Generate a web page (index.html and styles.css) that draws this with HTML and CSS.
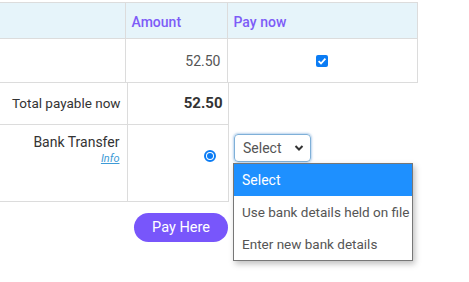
FILE: index.html
```html
<!DOCTYPE html>
<html>
<head>
<meta charset="utf-8">
<link rel="stylesheet" href="styles.css">
</head>
<body>
<div class="page">
  <table class="items">
    <colgroup><col class="c1"><col class="c2"><col class="c3"></colgroup>
    <thead>
      <tr><th class="blank"></th><th>Amount</th><th>Pay now</th></tr>
    </thead>
    <tbody>
      <tr><td class="blank"></td><td class="num">52.50</td><td class="center"><span class="checkbox"><svg width="12" height="12" viewBox="0 0 12 12"><path d="M2.6 6.2 L5 8.5 L9.4 3.6" fill="none" stroke="#fff" stroke-width="1.8"/></svg></span></td></tr>
    </tbody>
  </table>
  <div class="lower">
    <div class="left">
      <table class="totals">
        <colgroup><col class="t1"><col class="t2"></colgroup>
        <tr class="r1"><td class="label">Total payable now</td><td class="total">52.50</td></tr>
        <tr class="r2"><td class="label top"><div>Bank Transfer</div><a class="info" href="#">Info</a></td><td class="radio-cell"><span class="radio"></span></td></tr>
      </table>
      <div class="actions"><button class="pay">Pay Here</button></div>
    </div>
    <div class="select-wrap">
      <div class="select">Select<svg class="chev" width="10" height="8" viewBox="0 0 10 8"><path d="M1.5 2 L5 5.5 L8.5 2" fill="none" stroke="#333" stroke-width="2"/></svg></div>
      <div class="listbox">
        <div class="opt active">Select</div>
        <div class="opt">Use bank details held on file</div>
        <div class="opt">Enter new bank details</div>
      </div>
    </div>
  </div>
</div>
</body>
</html>
```
FILE: styles.css
```css
html, body { margin: 0; padding: 0; background: #fff; }
body { font-family: Roboto, "Liberation Sans", sans-serif; color: #444; min-height: 282px; }
.page { padding-top: 2px; }
table { border-collapse: collapse; table-layout: fixed; }
.items { width: 417px; }
.items .c1 { width: 125px; }
.items .c2 { width: 102px; }
.items .c3 { width: 190px; }
.items th, .items td { border: 1px solid #dcdcdc; padding: 0 6px; }
.items th.blank, .items td.blank { border-left: none; }
.items thead tr { height: 36px; background: #e6f4fa; }
.items th { text-align: left; color: #7d5cf7; font-weight: 500; font-size: 14px; padding-top: 2px; }
.items tbody tr { height: 44px; }
.num { text-align: right; font-size: 14px; color: #555; }
.center { text-align: center; }
.checkbox { display: inline-block; width: 12px; height: 12px; background: #0b7cf4; border-radius: 2px; vertical-align: middle; position: relative; top: -1px; }
.checkbox svg { display: block; }
.lower { display: flex; align-items: flex-start; }
.left { width: 228px; }
.totals { width: 228px; }
.totals .t1 { width: 127px; }
.totals .t2 { width: 101px; }
.totals td { border: 1px solid #dcdcdc; border-top: none; padding: 0 6px; }
.totals td.label { border-left: none; text-align: right; font-size: 13.5px; color: #333; }
.totals tr.r1 { height: 41px; }
.totals tr.r2 { height: 77px; }
.totals td.top { vertical-align: top; padding-top: 9px; padding-right: 7px; font-size: 14px; }
.totals td.total { text-align: right; font-size: 15px; font-weight: 700; color: #333; padding-right: 5px; }
.info { display: block; font-size: 11px; font-style: italic; color: #3d9ad6; text-decoration: underline; margin-top: 2px; }
.radio-cell { vertical-align: top; text-align: right; padding-top: 22px !important; padding-right: 12px !important; }
.radio { display: inline-block; box-sizing: border-box; width: 12px; height: 12px; border: 2px solid #0b7cf4; border-radius: 50%; position: relative; }
.radio::after { content: ""; position: absolute; left: 1px; top: 1px; width: 6px; height: 6px; border-radius: 50%; background: #0b7cf4; }
.actions { display: flex; justify-content: flex-end; padding-top: 11px; }
.pay { width: 94px; height: 29px; border: none; border-radius: 15px; background: #7856fb; color: #fff; font-family: Roboto, "Liberation Sans", sans-serif; font-size: 14.5px; padding: 0; }
.select-wrap { position: relative; margin-left: 6px; margin-top: 51px; }
.select { box-sizing: border-box; width: 77px; height: 28px; border: 1px solid #7fb0d8; border-radius: 4px; box-shadow: 0 0 2px 1px rgba(120,170,220,0.5); display: flex; align-items: center; justify-content: space-between; padding: 0 6px 0 8px; font-size: 14px; color: #555; }
.listbox { position: absolute; left: -1px; top: 29px; width: 178px; border: 1px solid #777; background: #fff; box-shadow: 2px 3px 6px rgba(0,0,0,0.25); }
.opt { height: 32px; line-height: 32px; padding-left: 8px; font-size: 13.5px; color: #555; white-space: nowrap; }
.opt.active { background: #1e90ff; color: #fff; font-size: 14px; }
```
